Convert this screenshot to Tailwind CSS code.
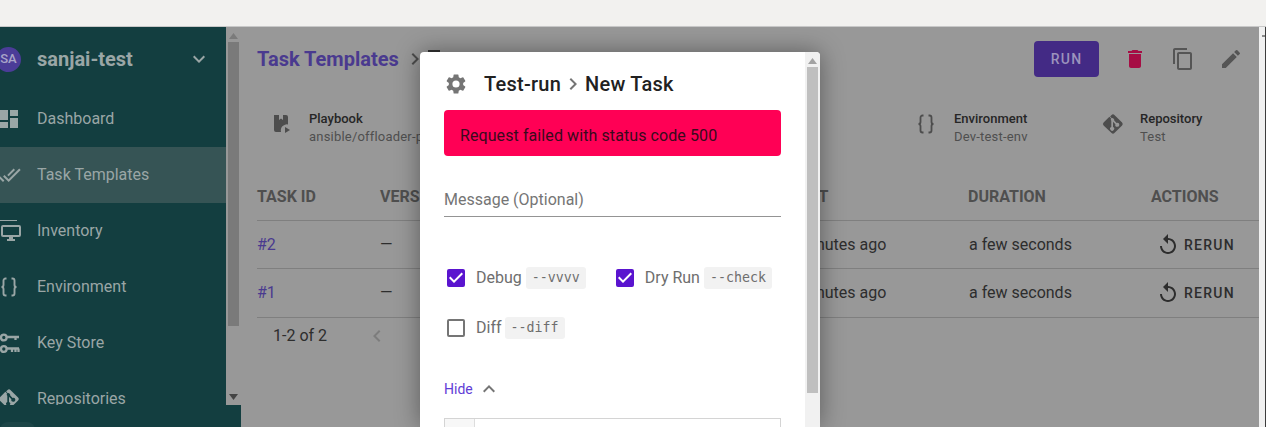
<!DOCTYPE html>
<html lang="en">

<head>
  <meta charset="UTF-8">
  <title>Task Templates</title>
  <script src="https://cdn.jsdelivr.net/npm/@tailwindcss/browser@4"></script>
</head>

<body class="w-[1266px] h-[427px] overflow-hidden bg-white font-['Roboto',sans-serif] text-[16px]">
  <!-- browser top strip -->
  <div class="h-[27px] bg-[#f2f1ef] border-b border-[#c8c8c8]"></div>

  <div class="relative flex h-[400px]">
    <!-- sidebar -->
    <aside class="w-[241px] shrink-0 bg-[#133e40] relative overflow-hidden">
      <div class="flex h-[378px]">
        <div class="w-[226px] overflow-hidden">
          <div class="flex items-center h-[64px] -ml-[4px]">
            <div class="w-[25px] h-[25px] rounded-full bg-[#4b3c98] text-[#a9a4c8] text-[13px] font-medium flex items-center justify-center">SA</div>
            <span class="ml-[16px] text-[20px] font-bold text-[#9aa6a6]">sanjai-test</span>
            <svg class="ml-auto mr-[15px]" width="24" height="24" viewBox="0 0 24 24" fill="#9aa6a6"><path d="M7.41 8.59 12 13.17l4.59-4.58L18 10l-6 6-6-6z"/></svg>
          </div>
          <nav class="text-[#9aa6a6]">
            <div class="flex items-center h-[56px] pl-[37px] relative">
              <svg class="absolute left-[-3px] top-[16px]" width="24" height="24" viewBox="0 0 24 24" fill="#9aa6a6"><path d="M3 13h8V3H3zm0 8h8v-6H3zm10 0h8V11h-8zm0-18v6h8V3z"/></svg>
              Dashboard
            </div>
            <div class="flex items-center h-[56px] pl-[37px] relative bg-[#365455]">
              <svg class="absolute left-[-3px] top-[16px]" width="24" height="24" viewBox="0 0 24 24" fill="#9aa6a6"><path d="M18 7l-1.41-1.41-6.34 6.34 1.41 1.41L18 7zm4.24-1.41L11.66 16.17 7.48 12l-1.41 1.41L11.66 19l12-12-1.42-1.41zM.41 13.41 6 19l1.41-1.41L1.83 12 .41 13.41z"/></svg>
              Task Templates
            </div>
            <div class="flex items-center h-[56px] pl-[37px] relative">
              <svg class="absolute left-[-1px] top-[16px]" width="24" height="24" viewBox="0 0 24 24" fill="#9aa6a6"><path d="M18 1H1v1h17zM20 6H4a2 2 0 0 0-2 2v8a2 2 0 0 0 2 2h6v2H8v2h8v-2h-2v-2h6a2 2 0 0 0 2-2V8a2 2 0 0 0-2-2zm0 10H4V8h16z"/></svg>
              Inventory
            </div>
            <div class="flex items-center h-[56px] pl-[37px] relative">
              <svg class="absolute left-[-3px] top-[16px]" width="24" height="24" viewBox="0 0 24 24" fill="none" stroke="#9aa6a6" stroke-width="1.9"><path d="M9.500 3.500H8.500a2 2 0 0 0-2 2V10a2 2 0 0 1-2 2 2 2 0 0 1 2 2v4.500a2 2 0 0 0 2 2h1M14.500 3.500h1a2 2 0 0 1 2 2V10a2 2 0 0 0 2 2 2 2 0 0 0-2 2v4.500a2 2 0 0 1-2 2h-1"/></svg>
              Environment
            </div>
            <div class="flex items-center h-[56px] pl-[37px] relative">
              <svg class="absolute left-0 top-[16px]" width="24" height="24" viewBox="0 0 24 24" fill="none" stroke="#9aa6a6" stroke-width="2.3"><circle cx="3.800" cy="6.500" r="2.800"/><path d="M6.500 6h12.500M15.500 6v3"/><circle cx="3.800" cy="18" r="2.800"/><path d="M6.500 17.500h12.500M12 17.500V21M15.500 17.500V21M18.500 17.500V21"/></svg>
              Key Store
            </div>
            <div class="flex items-center h-[56px] pl-[37px] relative">
              <svg class="absolute left-[-3px] top-[16px]" width="24" height="24" viewBox="0 0 24 24" fill="#9aa6a6"><path d="M2.6 10.59 8.38 4.8l1.69 1.7a2 2 0 0 0 .24 2.31V15a2 2 0 1 0 1.69 0V9.69l2.44 2.44a2 2 0 1 0 1.2-1.2L13.2 8.5a2 2 0 0 0-2.37-2.36L9.1 4.41l1.49-1.49a2 2 0 0 1 2.82 0l7.67 7.67a2 2 0 0 1 0 2.82l-7.67 7.67a2 2 0 0 1-2.82 0L2.6 13.41a2 2 0 0 1 0-2.82z"/></svg>
              Repositories
            </div>
          </nav>
        </div>
        <!-- sidebar scrollbar -->
        <div class="w-[15px] bg-[#989898] flex flex-col items-center">
          <svg class="mt-[6px] mb-[3px]" width="9" height="6" viewBox="0 0 9 6" fill="#7b7b7b"><path d="M4.5 0 9 6H0z"/></svg>
          <div class="w-[11px] h-[284px] bg-[#7a7a7a]"></div>
          <svg class="mt-auto mb-[5px]" width="9" height="6" viewBox="0 0 9 6" fill="#444"><path d="M0 0h9L4.500 6z"/></svg>
        </div>
      </div>
      <!-- button peeking out at the bottom of the sidebar -->
      <div class="absolute left-0 top-[395px] w-[35px] h-[10px] rounded-t-[8px] bg-[#1c4547]"></div>
    </aside>

    <!-- main content -->
    <main class="w-[1018px] shrink-0 bg-[#989898] pl-[16px]">
      <div class="flex items-center h-[64px] pr-[16px]">
        <span class="text-[20px] font-bold text-[#4a3a8f]">Task Templates</span>
        <svg class="ml-[4px]" width="24" height="24" viewBox="0 0 24 24" fill="#4d4d4d"><path d="M8.59 16.59 13.17 12 8.59 7.410 10 6l6 6-6 6z"/></svg>
        <div class="ml-[1px] self-start mt-[23px] w-[12px] h-[3px] bg-[#333333]"></div>
        <button class="ml-auto w-[65px] h-[36px] rounded-[4px] bg-[#432a85] text-[#9c93bd] text-[14px] font-medium tracking-[1.25px]">RUN</button>
        <svg class="ml-[24px]" width="24" height="24" viewBox="0 0 24 24" fill="#a60d44"><path d="M6 19c0 1.100.9 2 2 2h8c1.100 0 2-.9 2-2V7H6v12zM19 4h-3.500l-1-1h-5l-1 1H5v2h14V4z"/></svg>
        <svg class="ml-[24px]" width="24" height="24" viewBox="0 0 24 24" fill="#555"><path d="M16 1H4c-1.100 0-2 .9-2 2v14h2V3h12V1zm3 4H8c-1.100 0-2 .9-2 2v14c0 1.100.9 2 2 2h11c1.100 0 2-.9 2-2V7c0-1.100-.9-2-2-2zm0 16H8V7h11v14z"/></svg>
        <svg class="ml-[24px]" width="24" height="24" viewBox="0 0 24 24" fill="#555"><path d="M3 17.250V21h3.750L17.810 9.940l-3.750-3.750L3 17.250zM20.710 7.040a1 1 0 0 0 0-1.410l-2.340-2.340a1 1 0 0 0-1.410 0l-1.830 1.830 3.750 3.750 1.830-1.830z"/></svg>
      </div>
      <!-- template details -->
      <div class="relative h-[54px] text-[13px] leading-[18px]">
        <svg class="absolute left-[12px] top-[21px]" width="24" height="24" viewBox="0 0 24 24" fill="#4d4d4d"><path d="M5 3h5v5l2-1.500 2 1.500V3h3a2 2 0 0 1 2 2v7.500a6 6 0 0 0-7 7.500H7a2 2 0 0 1-2-2z"/><path d="M16 15v6l5-3z"/></svg>
        <div class="absolute left-[52px] top-[19px] whitespace-nowrap">
          <div class="font-medium text-[#262626]">Playbook</div>
          <div class="text-[#4f4f4f] tracking-[0.2px]">ansible/offloader-playbook.yml</div>
        </div>
        <div class="absolute left-[507px] top-[19px] whitespace-nowrap font-medium text-[#262626]">Inventory</div>
        <svg class="absolute left-[657px] top-[21px]" width="24" height="24" viewBox="0 0 24 24" fill="none" stroke="#4d4d4d" stroke-width="1.8"><path d="M9.500 3.500H8.500a2 2 0 0 0-2 2V10a2 2 0 0 1-2 2 2 2 0 0 1 2 2v4.500a2 2 0 0 0 2 2h1M14.500 3.500h1a2 2 0 0 1 2 2V10a2 2 0 0 0 2 2 2 2 0 0 0-2 2v4.500a2 2 0 0 1-2 2h-1"/></svg>
        <div class="absolute left-[697px] top-[19px] whitespace-nowrap">
          <div class="font-medium text-[#262626]">Environment</div>
          <div class="text-[#4f4f4f] tracking-[0.2px]">Dev-test-env</div>
        </div>
        <svg class="absolute left-[844px] top-[21px]" width="24" height="24" viewBox="0 0 24 24" fill="#4d4d4d"><path d="M2.6 10.590 8.380 4.800l1.690 1.700a2 2 0 0 0 .24 2.310V15a2 2 0 1 0 1.690 0V9.690l2.440 2.440a2 2 0 1 0 1.200-1.200L13.200 8.500a2 2 0 0 0-2.370-2.360L9.100 4.410l1.490-1.490a2 2 0 0 1 2.820 0l7.670 7.670a2 2 0 0 1 0 2.820l-7.670 7.670a2 2 0 0 1-2.820 0L2.600 13.410a2 2 0 0 1 0-2.820z"/></svg>
        <div class="absolute left-[883px] top-[19px] whitespace-nowrap">
          <div class="font-medium text-[#262626]">Repository</div>
          <div class="text-[#4f4f4f] tracking-[0.2px]">Test</div>
        </div>
      </div>
      <!-- tasks table -->
      <table class="w-[1002px] mt-[27px] table-fixed border-collapse text-[16px] text-[#2d2d2d]">
        <thead>
          <tr class="h-[48px] border-b border-[#7f7f7f] text-left text-[16px] font-bold text-[#4f4f4f]">
            <th class="w-[123px] pt-[2px] font-bold">TASK ID</th>
            <th class="w-[399px] pt-[2px] font-bold whitespace-nowrap">VERSION</th>
            <th class="w-[189px] pt-[2px] font-bold">START</th>
            <th class="w-[183px] pt-[2px] font-bold">DURATION</th>
            <th class="pt-[2px] font-bold">ACTIONS</th>
          </tr>
        </thead>
        <tbody>
          <tr class="h-[48px] border-b border-[#7f7f7f]">
            <td class="pt-[1px] text-[#4a3a8f]">#2</td>
            <td class="pt-[1px]">—</td>
            <td class="pt-[1px]"><span class="block -ml-[3px]">11 minutes ago</span></td>
            <td class="pt-[1px] pl-[1px]">a few seconds</td>
            <td class="pt-[2px]"><div class="flex items-center pl-[5px] text-[14px] font-medium tracking-[1.25px]"><svg class="mr-[4px]" width="24" height="24" viewBox="0 0 24 24" fill="#2d2d2d"><path d="M12 5V1L7 6l5 5V7c3.310 0 6 2.690 6 6s-2.690 6-6 6-6-2.690-6-6H4c0 4.420 3.580 8 8 8s8-3.580 8-8-3.580-8-8-8z"/></svg>RERUN</div></td>
          </tr>
          <tr class="h-[49px] border-b border-[#7f7f7f]">
            <td class="text-[#4a3a8f]">#1</td>
            <td>—</td>
            <td><span class="block -ml-[3px]">12 minutes ago</span></td>
            <td class="pl-[1px]">a few seconds</td>
            <td class="pt-[1px]"><div class="flex items-center pl-[5px] text-[14px] font-medium tracking-[1.25px]"><svg class="mr-[4px]" width="24" height="24" viewBox="0 0 24 24" fill="#2d2d2d"><path d="M12 5V1L7 6l5 5V7c3.310 0 6 2.690 6 6s-2.690 6-6 6-6-2.690-6-6H4c0 4.420 3.580 8 8 8s8-3.580 8-8-3.580-8-8-8z"/></svg>RERUN</div></td>
          </tr>
        </tbody>
      </table>
      <div class="flex items-center h-[36px] pl-[16px] text-[#2d2d2d]">
        <span class="text-[16px]">1-2 of 2</span>
        <svg class="ml-[38px]" width="24" height="24" viewBox="0 0 24 24" fill="#7d7d7d"><path d="M15.410 7.410 14 6l-6 6 6 6 1.410-1.410L10.830 12z"/></svg>
      </div>
    </main>
    <!-- page scrollbar, cut off at the window edge -->
    <div class="w-[6px] bg-[#f0f0f0] flex justify-end pt-[8px]">
      <div class="w-[3px] h-[2px] bg-[#8a8a8a]"></div>
    </div>
    <div class="w-[1px] bg-[#3c3c3c]"></div>

    <!-- dialog, lies over the page -->
    <div class="absolute left-[420px] top-[25px] w-[400px] h-[375px] bg-white rounded-t-[4px] flex overflow-hidden shadow-[0_0_24px_rgba(0,0,0,0.4)]">
      <div class="w-[385px] shrink-0 pl-[24px] pr-[24px]">
        <div class="flex items-center h-[58px] pt-[6px] text-[20px] font-medium text-[#212121] tracking-[0.25px]">
          <svg class="mr-[16px]" width="24" height="24" viewBox="0 0 24 24" fill="#757575"><path d="M19.140 12.940c.04-.3.06-.61.06-.94 0-.32-.02-.64-.07-.94l2.030-1.580a.49.49 0 0 0 .12-.61l-1.920-3.320a.49.49 0 0 0-.59-.22l-2.390.96c-.5-.38-1.030-.7-1.620-.94l-.36-2.540a.48.48 0 0 0-.48-.41h-3.840a.48.48 0 0 0-.47.41l-.36 2.540c-.59.24-1.130.57-1.620.94l-2.390-.96a.49.49 0 0 0-.59.22L2.740 8.870a.48.48 0 0 0 .12.61l2.030 1.580c-.05.3-.09.63-.09.94s.02.64.07.94l-2.030 1.580a.49.49 0 0 0-.12.61l1.920 3.320c.12.22.37.29.59.22l2.390-.96c.5.38 1.030.7 1.620.94l.36 2.540c.05.24.24.41.48.41h3.840c.24 0 .44-.17.47-.41l.36-2.540c.59-.24 1.130-.56 1.620-.94l2.390.96c.22.08.47 0 .59-.22l1.920-3.320a.48.48 0 0 0-.12-.61l-2.010-1.580zM12 15.600a3.600 3.600 0 1 1 0-7.200 3.600 3.600 0 0 1 0 7.200z"/></svg>
          Test-run
          <svg width="24" height="24" viewBox="0 0 24 24" fill="#757575"><path d="M8.590 16.590 13.170 12 8.590 7.410 10 6l6 6-6 6z"/></svg>
          New Task
        </div>
        <div class="flex items-center h-[46px] rounded-[4px] bg-[#ff0055] pl-[16px] pt-[6px] text-[16px] tracking-[0.09px] text-[#3a0a1c]">Request failed with status code 500</div>
        <div class="mt-[30px] h-[31px] border-b border-[#949494] text-[16px] text-[#757575] leading-[28px]">Message (Optional)</div>
        <div class="mt-[49px] flex items-center h-[24px] text-[#6e6e6e]">
          <svg class="mr-[8px]" width="24" height="24" viewBox="0 0 24 24" fill="#5a14cf"><path d="M19 3H5a2 2 0 0 0-2 2v14a2 2 0 0 0 2 2h14a2 2 0 0 0 2-2V5a2 2 0 0 0-2-2zm-9 14-5-5 1.410-1.410L10 14.170l7.590-7.590L19 8l-9 9z"/></svg>
          Debug
          <code class="ml-[4px] px-[6px] h-[22px] leading-[22px] rounded-[3px] bg-[#f2f2f2] text-[#6e6e6e] text-[13.3px] font-['DejaVu_Sans_Mono',monospace]">--vvvv</code>
          <svg class="ml-[27px] mr-[8px]" width="24" height="24" viewBox="0 0 24 24" fill="#5a14cf"><path d="M19 3H5a2 2 0 0 0-2 2v14a2 2 0 0 0 2 2h14a2 2 0 0 0 2-2V5a2 2 0 0 0-2-2zm-9 14-5-5 1.410-1.410L10 14.170l7.590-7.590L19 8l-9 9z"/></svg>
          Dry Run
          <code class="ml-[4px] px-[6px] h-[22px] leading-[22px] rounded-[3px] bg-[#f2f2f2] text-[#6e6e6e] text-[13.3px] font-['DejaVu_Sans_Mono',monospace]">--check</code>
        </div>
        <div class="mt-[26px] flex items-center h-[24px] text-[#6e6e6e]">
          <svg class="mr-[8px]" width="24" height="24" viewBox="0 0 24 24" fill="#757575"><path d="M19 5v14H5V5h14m0-2H5a2 2 0 0 0-2 2v14a2 2 0 0 0 2 2h14a2 2 0 0 0 2-2V5a2 2 0 0 0-2-2z"/></svg>
          Diff
          <code class="ml-[3px] px-[6px] h-[22px] leading-[22px] rounded-[3px] bg-[#f2f2f2] text-[#6e6e6e] text-[13.3px] font-['DejaVu_Sans_Mono',monospace]">--diff</code>
        </div>
        <div class="mt-[37px] flex items-center h-[24px] text-[14px] text-[#5f3dd6]">
          Hide
          <svg class="ml-[4px]" width="24" height="24" viewBox="0 0 24 24" fill="#757575"><path d="M12 8l-6 6 1.410 1.410L12 10.830l4.590 4.580L18 14z"/></svg>
        </div>
        <div class="mt-[17px] h-[20px] border border-[#d4d4d4] flex">
          <div class="w-[30px] bg-[#f7f7f7] border-r border-[#dddddd]"></div>
        </div>
      </div>
      <!-- dialog scrollbar -->
      <div class="w-[15px] bg-[#f1f1f1] flex flex-col items-center">
        <svg class="mt-[6px] mb-[3px]" width="9" height="6" viewBox="0 0 9 6" fill="#a3a3a3"><path d="M4.500 0 9 6H0z"/></svg>
        <div class="w-[11px] h-[326px] bg-[#bfbfbf]"></div>
      </div>
    </div>
  </div>
</body>

</html>
